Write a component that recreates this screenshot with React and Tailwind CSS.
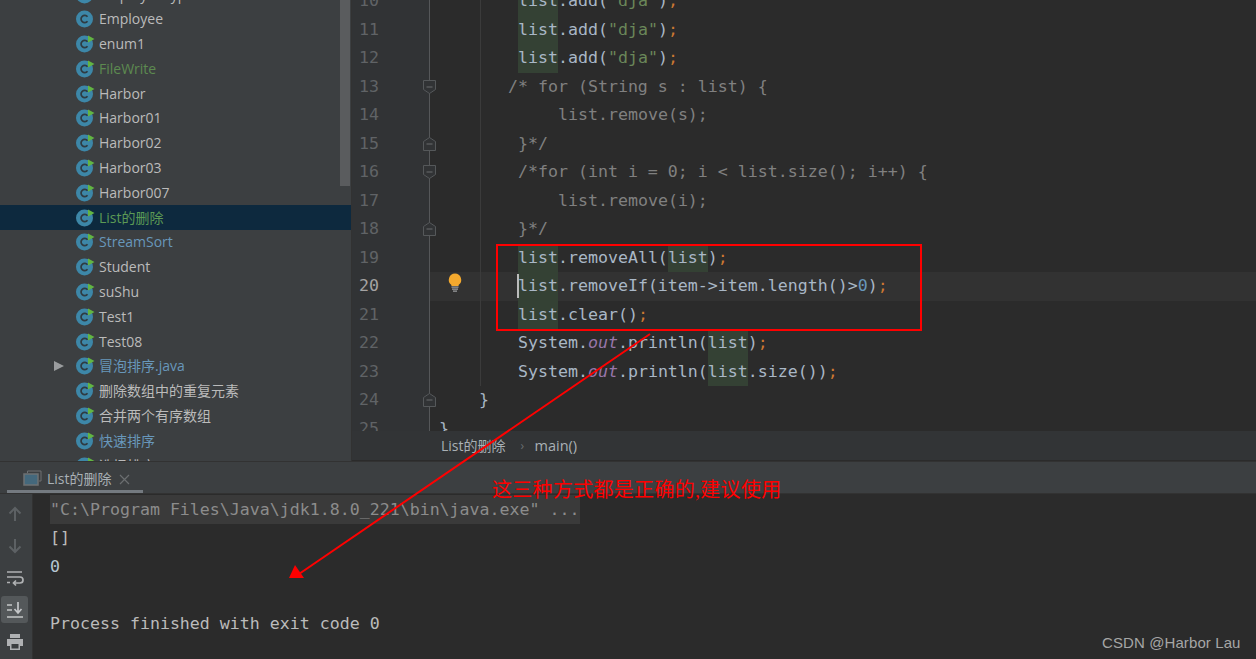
const TREE = [
  { name: 'EmployeeType', clip: true },
  { name: 'Employee', plain: true },
  { name: 'enum1' },
  { name: 'FileWrite', color: 'text-[#5c8a50]' },
  { name: 'Harbor' },
  { name: 'Harbor01' },
  { name: 'Harbor02' },
  { name: 'Harbor03' },
  { name: 'Harbor007' },
  { name: 'List的删除', color: 'text-[#5c9a55]', selected: true },
  { name: 'StreamSort', color: 'text-[#6897bb]' },
  { name: 'Student' },
  { name: 'suShu' },
  { name: 'Test1' },
  { name: 'Test08' },
  { name: '冒泡排序.java', color: 'text-[#6897bb]', arrow: true },
  { name: '删除数组中的重复元素' },
  { name: '合并两个有序数组' },
  { name: '快速排序', color: 'text-[#6897bb]' },
  { name: '选择排序', color: 'text-[#bbbbbb]' },
]

const Hl = ({ children }) => <span className="inline-block h-[28.5px] align-top bg-[#344134]">{children}</span>
const Semi = () => <span className="text-[#cc7832]">;</span>
const Str = ({ children }) => <span className="text-[#6a8759]">{children}</span>
const Out = () => <span className="italic text-[#9876aa]">out</span>
const Dim = ({ children }) => <span className="text-[#808080]">{children}</span>

const LINES = [
  { n: 10, code: <><Hl>list</Hl>.add(<Str>"dja"</Str>)<Semi /></> },
  { n: 11, code: <><Hl>list</Hl>.add(<Str>"dja"</Str>)<Semi /></> },
  { n: 12, code: <><Hl>list</Hl>.add(<Str>"dja"</Str>)<Semi /></> },
  { n: 13, fold: 'start', pad: 'pl-[156px]', code: <Dim>/* for (String s : list) {'{'}</Dim> },
  { n: 14, pad: 'pl-[206px]', code: <Dim>list.remove(s);</Dim> },
  { n: 15, fold: 'end', code: <Dim>{'}'}*/</Dim> },
  { n: 16, fold: 'start', code: <Dim>/*for (int i = 0; i &lt; list.size(); i++) {'{'}</Dim> },
  { n: 17, pad: 'pl-[206px]', code: <Dim>list.remove(i);</Dim> },
  { n: 18, fold: 'end', code: <Dim>{'}'}*/</Dim> },
  { n: 19, code: <><Hl>list</Hl>.removeAll(<Hl>list</Hl>)<Semi /></> },
  { n: 20, current: true, code: <><Hl>list</Hl>.removeIf(item-&gt;item.length()&gt;<span className="text-[#6897bb]">0</span>)<Semi /></> },
  { n: 21, code: <><Hl>list</Hl>.clear()<Semi /></> },
  { n: 22, code: <>System.<Out />.println(<Hl>list</Hl>)<Semi /></> },
  { n: 23, code: <>System.<Out />.println(<Hl>list</Hl>.size())<Semi /></> },
  { n: 24, fold: 'end', noGuide: true, pad: 'pl-[127px]', code: <>{'}'}</> },
  { n: 25, noGuide: true, pad: 'pl-[87px]', code: <>{'}'}</> },
]

function ClassIcon({ plain }) {
  return (
    <svg width="19" height="19" viewBox="0 0 19 19" className="shrink-0">
      <circle cx="8.5" cy="10" r="8.5" fill="#3d87a8" />
      <path d="M11.5 7.8a3.6 3.6 0 1 0 0 4.4" fill="none" stroke="#2f3b42" strokeWidth="1.7" />
      {!plain && <path d="M12 1.5 L18.5 5 L12 8.5 Z" fill="#62b543" />}
    </svg>
  )
}

function FoldMark({ type }) {
  const d = type === 'start'
    ? 'M0.5 0.5H12.5V9.5L6.5 13.5L0.5 9.5Z'
    : 'M0.5 13.5H12.5V4.5L6.5 0.5L0.5 4.5Z'
  return (
    <svg width="13" height="14" viewBox="0 0 13 14" className="absolute left-[423px] top-[7px]">
      <path d={d} fill="#313335" stroke="#55585a" />
      <path d="M3.5 7H9.5" stroke="#6b6d6f" />
    </svg>
  )
}

function ToolIcon({ children, active }) {
  return (
    <div className={`w-[27px] h-[27px] ml-[1px] flex items-center justify-center rounded-[3px] ${active ? 'bg-[#54585a]' : ''}`}>
      <svg width="18" height="18" viewBox="0 0 18 18" fill="none">{children}</svg>
    </div>
  )
}

export default function App() {
  return (
    <div className="relative w-[1256px] h-[659px] overflow-hidden flex flex-col bg-[#2b2b2b] font-['Liberation_Sans',sans-serif]">
      {/* Top: project tree + editor */}
      <div className="flex h-[461px] shrink-0 overflow-hidden">
        <div className="relative w-[352px] shrink-0 overflow-hidden bg-[#3c3f41] border-r border-[#323232] font-['Open_Sans','Noto_Sans_CJK_SC',sans-serif] text-[14px] text-[#bbbbbb]">
          <div className="-mt-[18.4px]">
            {TREE.map((item) => (
              <div
                key={item.name}
                className={`relative h-[24.8px] flex items-center pl-[76px] gap-[4px] ${item.selected ? 'bg-[#0d293e]' : ''} ${item.color || ''}`}
              >
                {item.arrow && (
                  <span className="absolute left-[54px] top-[7px] w-0 h-0 border-y-[5px] border-y-transparent border-l-[10px] border-l-[#9a9c9e]" />
                )}
                <ClassIcon plain={item.plain} />
                <span>{item.name}</span>
              </div>
            ))}
          </div>
          <div className="absolute left-[340px] top-0 w-[10px] h-[186px] bg-[#5a5c5e]" />
        </div>

        <div className="relative flex-1 min-w-0 flex flex-col bg-[#2b2b2b] font-['DejaVu_Sans_Mono',monospace] text-[16.6px] text-[#a9b7c6]">
          <div className="flex-1 min-h-0 overflow-hidden">
            <div className="-mt-[13px]">
              {LINES.map((line) => (
                <div key={line.n} className={`relative h-[28.5px] leading-[28.5px] whitespace-pre ${line.current ? 'bg-[#323232]' : ''}`}>
                  <div className={`absolute left-0 top-0 w-[77px] h-full bg-[#313335] pl-[7px] ${line.current ? 'text-[#a4a3a3]' : 'text-[#606366]'}`}>{line.n}</div>
                  <div className="absolute left-[77px] top-0 w-px h-full bg-[#555759]" />
                  {!line.noGuide && <div className="absolute left-[128px] top-0 w-px h-full bg-[#3b3b3b]" />}
                  <div className={line.pad || 'pl-[166px]'}>
                    <span className="relative">{line.code}</span>
                  </div>
                </div>
              ))}
            </div>
          </div>
          <div className="h-[30px] shrink-0 flex items-center pl-[89px] bg-[#323436] border-b border-[#2b2b2b] font-['Open_Sans','Noto_Sans_CJK_SC',sans-serif] text-[14px] text-[#a9b0b5]">
            <span>List的删除</span>
            <span className="ml-[15px] w-[14px] text-[#6b6e70] text-[12px]">›</span>
            <span className="text-[14.5px]">main()</span>
          </div>
          {/* fold markers */}
          <div className="absolute left-[-352px] top-[-13px] w-full pointer-events-none">
            {LINES.map((line) => (
              <div key={line.n} className="relative h-[28.5px]">
                {line.fold && <FoldMark type={line.fold} />}
              </div>
            ))}
          </div>
        </div>
      </div>

      {/* Run tool window */}
      <div className="h-[33px] shrink-0 bg-[#3c3f41] border-y border-[#323232] relative flex items-start pl-[23px] pt-[6px] gap-[5px] font-['Open_Sans','Noto_Sans_CJK_SC',sans-serif] text-[14px] text-[#a9b0b5]">
        <svg width="19" height="16" viewBox="0 0 19 16" fill="none" className="mt-[2px]">
          <path d="M4.5 3V1H18V11H16" stroke="#6e7173" strokeWidth="1" />
          <path d="M1 4H15V15H1Z" stroke="#6e7173" strokeWidth="1.5" fill="#44687c" />
        </svg>
        <span>List的删除</span>
        <svg width="11" height="11" viewBox="0 0 11 11" className="ml-[2px] mt-[6px]">
          <path d="M1 1L10 10M10 1L1 10" stroke="#6b6e70" strokeWidth="1.2" />
        </svg>
        <div className="absolute left-[7px] bottom-0 w-[136px] h-[3px] bg-[#747a80]" />
      </div>

      <div className="flex-1 min-h-0 flex">
        <div className="w-[33px] shrink-0 bg-[#3c3f41] border-r border-[#323232] pt-[6px] flex flex-col gap-[5px]">
          <ToolIcon>
            <path d="M9 16V3M3.5 8.5L9 3L14.5 8.5" stroke="#5d6164" strokeWidth="2" />
          </ToolIcon>
          <ToolIcon>
            <path d="M9 2V15M3.5 9.5L9 15L14.5 9.5" stroke="#5d6164" strokeWidth="2" />
          </ToolIcon>
          <ToolIcon>
            <path d="M1 3H16M1 8H14a2.5 2.5 0 0 1 0 6H8M10 11.5L7.5 14L10 16.5M1 13.5H4" stroke="#afb1b3" strokeWidth="1.7" />
          </ToolIcon>
          <ToolIcon active>
            <path d="M1 4H6M1 9H6M1 16H17M12 1V11M8.5 8L12 12L15.5 8" stroke="#c4c6c8" strokeWidth="1.7" />
          </ToolIcon>
          <ToolIcon>
            <path d="M4 1H14V5H4ZM1 6H17V13H14V17H4V13H1Z" fill="#afb1b3" />
            <path d="M5.5 11H12.5V15.5H5.5Z" fill="#3c3f41" />
          </ToolIcon>
        </div>
        <div className="flex-1 min-w-0 pl-[17px] pt-[2px] font-['DejaVu_Sans_Mono',monospace] text-[16.6px] leading-[28.4px] text-[#bbbbbb] whitespace-pre">
          <div className="w-fit -mt-[1px] pt-[1px] bg-[#3a3a3a] text-[#8c8c8c]">"C:\Program Files\Java\jdk1.8.0_221\bin\java.exe" ...</div>
          <div>[]</div>
          <div className="text-[#b6c6d2]">0</div>
          <div>&nbsp;</div>
          <div>Process finished with exit code 0</div>
        </div>
      </div>

      {/* Overlays: current line caret and bulb */}
      <div className="absolute left-[517px] top-[274px] w-[2px] h-[24px] bg-[#bbbbbb]" />
      <svg width="16" height="20" viewBox="0 0 16 20" className="absolute left-[447px] top-[273px]">
        <path d="M8 0.5a6.3 6.3 0 0 1 3.6 11.4V13H4.4v-1.1A6.3 6.3 0 0 1 8 0.5Z" fill="#f4a92e" />
        <path d="M4.5 14.2H11.5M5 16.2H11M6 18.2H10" stroke="#9a9c9e" strokeWidth="1.2" />
      </svg>

      {/* Red annotations drawn on the screenshot */}
      <div className="absolute left-[496px] top-[244px] w-[426px] h-[87px] border-2 border-[#ff0000]" />
      <svg width="1256" height="659" className="absolute left-0 top-0 pointer-events-none">
        <path d="M650 334L299 574" stroke="#ff0000" strokeWidth="2" />
        <path d="M295 565L304 578H289Z" fill="#ff0000" />
      </svg>
      <div className="absolute left-[492px] top-[477px] text-[20px] leading-[26px] tracking-[0.3px] text-[#ff0000] whitespace-nowrap font-['Liberation_Serif','Noto_Sans_CJK_SC',serif]">
        这三种方式都是正确的,建议使用
      </div>
      <div className="absolute left-[1102px] top-[634px] text-[15px] leading-[18px] tracking-[0.1px] text-[#a6a6a6] whitespace-nowrap">
        CSDN @Harbor Lau
      </div>
    </div>
  )
}
